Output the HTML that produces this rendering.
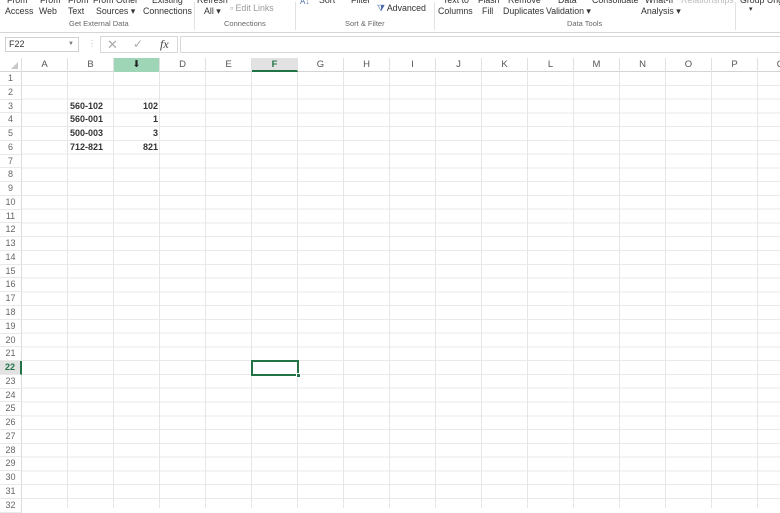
<!DOCTYPE html>
<html><head><meta charset="utf-8"><style>
*{margin:0;padding:0;box-sizing:border-box}
body{width:780px;height:508px;overflow:hidden;background:#fff;font-family:"Liberation Sans",sans-serif;position:relative;color:#444}
.t{position:absolute;font-size:8.8px;white-space:nowrap;color:#333}
.g{position:absolute;font-size:7.5px;color:#666;white-space:nowrap}
.sep{position:absolute;top:2px;height:28px;width:1px;background:#e2e2e2}
#grid{position:absolute;left:22px;top:72px;width:758px;height:436px;
background-image:repeating-linear-gradient(90deg,transparent 0,transparent 45px,#e6e6e6 45px,#e6e6e6 46px),
repeating-linear-gradient(180deg,transparent 0,transparent 12.77px,#e9e9e9 12.77px,#e9e9e9 13.77px)}
#rh{position:absolute;left:0;top:72px;width:22px}
#rh div{height:13.77px;font-size:9px;color:#666;text-align:center;line-height:13.77px;border-bottom:1px solid #e9e9e9;border-right:1px solid #dcdcdc;background:#fff}
#ch{position:absolute;left:0;top:58px;height:14px;width:780px;border-bottom:1px solid #d4d4d4;background:#fff}
#ch div{position:absolute;top:0;width:46px;height:14px;text-align:center;font-size:9.5px;line-height:14px;color:#555;border-right:1px solid #e0e0e0}
.c{position:absolute;font-size:9px;font-weight:bold;color:#333;height:13.77px;line-height:13.77px}
</style></head><body>
<div style="position:absolute;left:0;top:0;width:780px;height:33px;background:#fff;border-bottom:1px solid #d6d6d6"></div>
<div class="t" style="left:7px;top:-5px">From</div><div class="t" style="left:5px;top:6px">Access</div>
<div class="t" style="left:40px;top:-5px">From</div><div class="t" style="left:39px;top:6px">Web</div>
<div class="t" style="left:68px;top:-5px">From</div><div class="t" style="left:68px;top:6px">Text</div>
<div class="t" style="left:93px;top:-5px">From Other</div><div class="t" style="left:96px;top:6px">Sources ▾</div>
<div class="t" style="left:152px;top:-5px">Existing</div><div class="t" style="left:143px;top:6px">Connections</div>
<div class="g" style="left:69px;top:19px">Get External Data</div>
<div class="sep" style="left:194px"></div>
<div class="t" style="left:197px;top:-5px">Refresh</div><div class="t" style="left:204px;top:6px">All ▾</div>
<div class="t" style="left:230px;top:3px;color:#999">▫ Edit Links</div>
<div class="g" style="left:224px;top:19px">Connections</div>
<div class="sep" style="left:295px"></div>
<div class="t" style="left:300px;top:-3px;font-size:8px;color:#4a6aa8">A↓</div>
<div class="t" style="left:319px;top:-5px">Sort</div>
<div class="t" style="left:351px;top:-5px">Filter</div>
<div class="t" style="left:377px;top:3px"><span style="color:#4a6aa8">⧩</span> Advanced</div>
<div class="g" style="left:345px;top:19px">Sort &amp; Filter</div>
<div class="sep" style="left:434px"></div>
<div class="t" style="left:443px;top:-5px">Text to</div><div class="t" style="left:438px;top:6px">Columns</div>
<div class="t" style="left:478px;top:-5px">Flash</div><div class="t" style="left:482px;top:6px">Fill</div>
<div class="t" style="left:508px;top:-5px">Remove</div><div class="t" style="left:503px;top:6px">Duplicates</div>
<div class="t" style="left:558px;top:-5px">Data</div><div class="t" style="left:546px;top:6px">Validation ▾</div>
<div class="t" style="left:592px;top:-5px">Consolidate</div>
<div class="t" style="left:645px;top:-5px">What-If</div><div class="t" style="left:641px;top:6px">Analysis ▾</div>
<div class="t" style="left:681px;top:-5px;color:#bbb">Relationships</div>
<div class="g" style="left:567px;top:19px">Data Tools</div>
<div class="sep" style="left:735px"></div>
<div class="t" style="left:740px;top:-5px">Group Ung</div><div class="t" style="left:749px;top:5px;font-size:7px">▾</div>
<div style="position:absolute;left:0;top:34px;width:780px;height:24px;background:#fff"></div>
<div style="position:absolute;left:5px;top:37px;width:74px;height:15px;border:1px solid #d0d0d0;font-size:9px;line-height:13px;padding-left:3px;color:#333">F22<span style="position:absolute;right:4px;font-size:6px;color:#777">▼</span></div>
<div class="t" style="left:88px;top:39px;color:#bbb;font-size:8px">⋮</div>
<div style="position:absolute;left:100px;top:36px;width:78px;height:17px;border:1px solid #d8d8d8"></div>
<div class="t" style="left:107px;top:37px;color:#aaa;font-size:13px">✕</div>
<div class="t" style="left:133px;top:37px;color:#aaa;font-size:12px">✓</div>
<div class="t" style="left:160px;top:37px;font-family:'Liberation Serif',serif;font-style:italic;font-size:12px;color:#444">fx</div>
<div style="position:absolute;left:180px;top:36px;width:600px;height:17px;border:1px solid #d8d8d8;border-right:none"></div>
<div id="ch">
<div style="left:0;width:22px"><span style="position:absolute;left:11px;top:4px;width:0;height:0;border-left:7px solid transparent;border-bottom:7px solid #c8c8c8"></span></div>
<div style="left:22px">A</div><div style="left:68px">B</div>
<div style="left:114px;background:#9fd5b7;color:#222">⬇</div>
<div style="left:160px">D</div><div style="left:206px">E</div>
<div style="left:252px;background:#e2e2e2;border-bottom:2px solid #217346;color:#217346;font-weight:bold">F</div>
<div style="left:298px">G</div><div style="left:344px">H</div><div style="left:390px">I</div><div style="left:436px">J</div><div style="left:482px">K</div><div style="left:528px">L</div><div style="left:574px">M</div><div style="left:620px">N</div><div style="left:666px">O</div><div style="left:712px">P</div><div style="left:758px">Q</div>
</div>
<div id="grid"></div>
<div id="rh">
<div>1</div><div>2</div><div>3</div><div>4</div><div>5</div><div>6</div><div>7</div><div>8</div><div>9</div><div>10</div><div>11</div><div>12</div><div>13</div><div>14</div><div>15</div><div>16</div><div>17</div><div>18</div><div>19</div><div>20</div><div>21</div>
<div style="background:#e2e2e2;color:#217346;font-weight:bold;border-right:2px solid #217346">22</div>
<div>23</div><div>24</div><div>25</div><div>26</div><div>27</div><div>28</div><div>29</div><div>30</div><div>31</div><div>32</div>
</div>
<div class="c" style="left:70px;top:99.5px">560-102</div><div class="c" style="left:114px;width:44px;text-align:right;top:99.5px">102</div>
<div class="c" style="left:70px;top:113.3px">560-001</div><div class="c" style="left:114px;width:44px;text-align:right;top:113.3px">1</div>
<div class="c" style="left:70px;top:127px">500-003</div><div class="c" style="left:114px;width:44px;text-align:right;top:127px">3</div>
<div class="c" style="left:70px;top:140.8px">712-821</div><div class="c" style="left:114px;width:44px;text-align:right;top:140.8px">821</div>
<div style="position:absolute;left:251px;top:360px;width:48px;height:16px;border:2px solid #217346"></div>
<div style="position:absolute;left:296px;top:373px;width:5px;height:5px;background:#217346;border:1px solid #fff"></div>
</body></html>
